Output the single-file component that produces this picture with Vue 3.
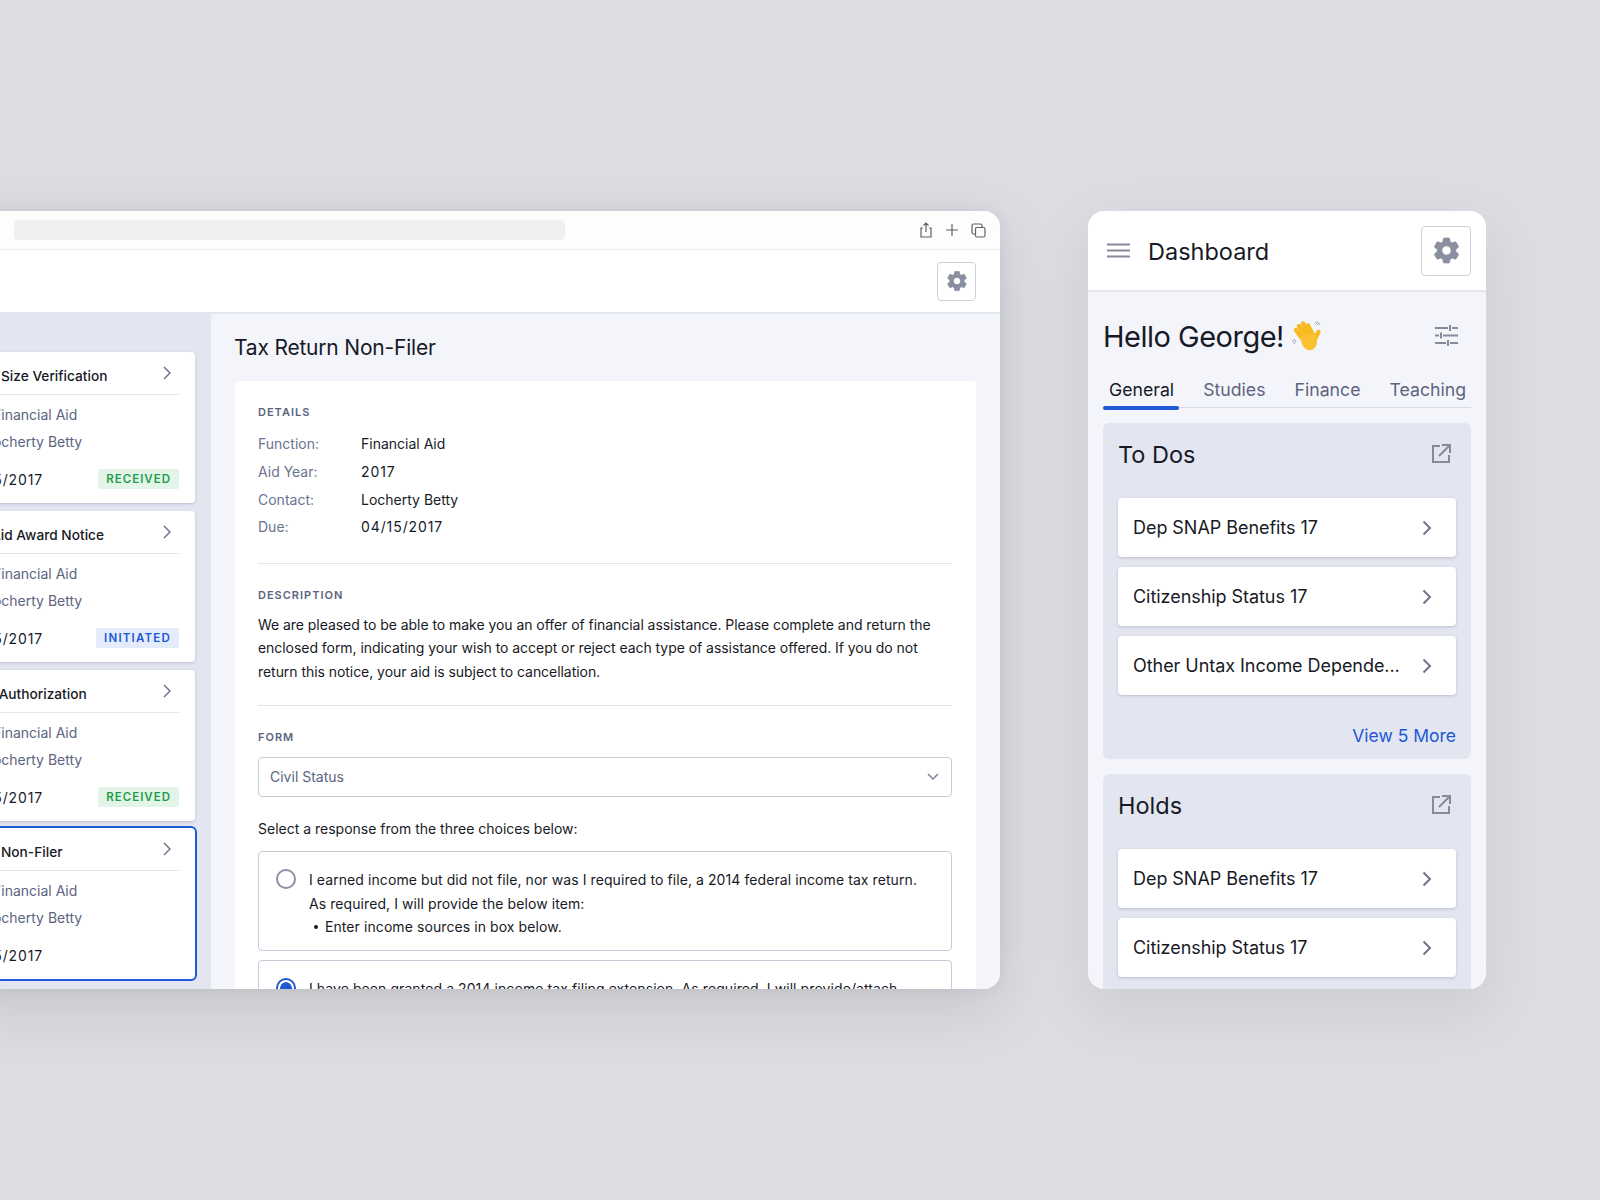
<template>
  <div class="page">
    <div class="browser">
      <div class="toolbar">
        <div class="address"></div>
        <div class="tools">
          <svg class="tool" viewBox="0 0 14 16" width="14" height="16"><path d="M4 6H2v9h10V6h-2M7 10V1M4.5 3.5L7 1l2.5 2.5" /></svg>
          <svg class="tool" viewBox="0 0 14 14" width="14" height="14"><path d="M7 1v12M1 7h12" /></svg>
          <svg class="tool" viewBox="0 0 15 15" width="15" height="15"><rect x="4.500" y="4.500" width="9.500" height="9.500" rx="1.500" /><path d="M4.500 11H2.500A1.500 1.500 0 0 1 1 9.500v-7A1.500 1.500 0 0 1 2.500 1h7A1.500 1.500 0 0 1 11 2.500v2" /></svg>
        </div>
      </div>
      <div class="app-head">
        <button class="gear-btn">
          <svg viewBox="0 0 24 24" width="24" height="24"><path :d="gearPath" /></svg>
        </button>
      </div>
      <div class="app-body">
        <aside class="rail">
          <div v-for="c in cards" :key="c.title" class="card" :class="{ active: c.active }">
            <div class="card-title">
              <span>{{ c.title }}</span>
              <svg class="chev" viewBox="0 0 8 14" width="8" height="14"><path d="M1 1l6 6-6 6" /></svg>
            </div>
            <div class="line">Financial Aid</div>
            <div class="line contact">Locherty Betty</div>
            <div class="card-foot">
              <span class="date">04/15/2017</span>
              <span v-if="c.status" class="pill" :class="c.status.toLowerCase()">{{ c.status }}</span>
            </div>
          </div>
        </aside>
        <main class="main">
          <h1 class="main-title">Tax Return Non-Filer</h1>
          <section class="sheet">
            <h2 class="label">DETAILS</h2>
            <div class="details">
              <template v-for="d in details" :key="d.key">
                <span class="d-key">{{ d.key }}</span>
                <span :class="{ date: d.numeric }">{{ d.value }}</span>
              </template>
            </div>
            <hr class="rule first" />
            <h2 class="label">DESCRIPTION</h2>
            <p class="para">We are pleased to be able to make you an offer of financial assistance. Please complete and return the enclosed form, indicating your wish to accept or reject each type of assistance offered. If you do not return this notice, your aid is subject to cancellation.</p>
            <hr class="rule second" />
            <h2 class="label">FORM</h2>
            <div class="select">
              <span>Civil Status</span>
              <svg viewBox="0 0 12 8" width="12" height="8"><path d="M1 1l5 5 5-5" /></svg>
            </div>
            <p class="prompt">Select a response from the three choices below:</p>
            <div class="option">
              <span class="radio"></span>
              <div class="opt-text">
                <div>I earned income but did not file, nor was I required to file, a 2014 federal income tax return.</div>
                <div>As required, I will provide the below item:</div>
                <div class="bullet">Enter income sources in box below.</div>
              </div>
            </div>
            <div class="option">
              <span class="radio on"></span>
              <div class="opt-text">
                <div>I have been granted a 2014 income tax filing extension. As required, I will provide/attach</div>
              </div>
            </div>
          </section>
        </main>
      </div>
    </div>

    <div class="phone">
      <header class="phone-head">
        <svg class="burger" viewBox="0 0 23 15" width="23" height="15"><path d="M0 1.500h23M0 7.500h23M0 13.500h23" /></svg>
        <span class="phone-title">Dashboard</span>
        <button class="gear-btn big">
          <svg viewBox="0 0 24 24" width="31" height="31"><path :d="gearPath" /></svg>
        </button>
      </header>
      <div class="phone-body">
        <div class="hello">
          <span>Hello George!</span>
          <svg class="wave" viewBox="0 0 32 32" width="32" height="32">
            <g stroke="#8c8f99" stroke-width=".8" fill="none"><path d="M1 20l3 4M3 19l2 3M24 2l3 3M26 1l3 4" /></g>
            <g stroke="#f8b921" stroke-width="4.400" stroke-linecap="round" fill="none">
              <path d="M10 17L5 10M13 14L8 6M17 13L12 3.500M21 13L17 5.500M24 19l3.500-7" />
            </g>
            <path d="M9 16l15-3 2 8c0 6-4 10-9 9-4-1-7-6-8-14z" fill="#fbc02d" />
          </svg>
          <svg class="sliders" viewBox="0 0 23 21" width="23" height="21"><path d="M0 3h13M17 3h6M15 0v6M0 10.500h4M8 10.500h15M6 7.500v6M0 18h11M15 18h8M13 15v6" /></svg>
        </div>
        <nav class="tabs">
          <span v-for="t in tabs" :key="t" class="tab" :class="{ current: t === 'General' }">{{ t }}</span>
        </nav>
        <section v-for="p in panels" :key="p.title" class="panel">
          <div class="panel-head">
            <h3>{{ p.title }}</h3>
            <svg viewBox="0 0 20 20" width="20" height="20"><path d="M9 2H2v16h16v-7M11 1h8v8M19 1L8 12" /></svg>
          </div>
          <div v-for="r in p.rows" :key="r" class="row">
            <span>{{ r }}</span>
            <svg class="chev wide" viewBox="0 0 10 16" width="10" height="16"><path d="M1.500 1.500L8 8l-6.500 6.500" /></svg>
          </div>
          <a v-if="p.more" class="more">View 5 More</a>
        </section>
      </div>
    </div>
  </div>
</template>

<script setup>
const gearPath = 'M19.14 12.94c.04-.3.06-.61.06-.94 0-.32-.02-.64-.07-.94l2.03-1.58a.49.49 0 0 0 .12-.61l-1.92-3.32a.488.488 0 0 0-.59-.22l-2.39.96c-.5-.38-1.03-.7-1.62-.94l-.36-2.54a.484.484 0 0 0-.48-.41h-3.84c-.24 0-.43.17-.47.41l-.36 2.54c-.59.24-1.13.57-1.62.94l-2.39-.96c-.22-.08-.47 0-.59.22L2.74 8.87c-.12.21-.08.47.12.61l2.03 1.58c-.05.3-.09.63-.09.94s.02.64.07.94l-2.03 1.58a.49.49 0 0 0-.12.61l1.92 3.32c.12.22.37.29.59.22l2.39-.96c.5.38 1.03.7 1.62.94l.36 2.54c.05.24.24.41.48.41h3.84c.24 0 .44-.17.47-.41l.36-2.54c.59-.24 1.13-.56 1.62-.94l2.39.96c.22.08.47 0 .59-.22l1.92-3.32c.12-.22.07-.47-.12-.61l-2.01-1.58zM12 15.6c-1.98 0-3.6-1.62-3.6-3.6s1.62-3.6 3.6-3.6 3.6 1.62 3.6 3.6-1.62 3.6-3.6 3.6z'

const cards = [
  { title: '- Size Verification', status: 'RECEIVED' },
  { title: 'Aid Award Notice', status: 'INITIATED' },
  { title: '. Authorization', status: 'RECEIVED' },
  { title: '- Non-Filer', active: true },
]

const details = [
  { key: 'Function:', value: 'Financial Aid' },
  { key: 'Aid Year:', value: '2017', numeric: true },
  { key: 'Contact:', value: 'Locherty Betty' },
  { key: 'Due:', value: '04/15/2017', numeric: true },
]

const tabs = ['General', 'Studies', 'Finance', 'Teaching']

const panels = [
  { title: 'To Dos', more: true, rows: ['Dep SNAP Benefits 17', 'Citizenship Status 17', 'Other Untax Income Depende...'] },
  { title: 'Holds', rows: ['Dep SNAP Benefits 17', 'Citizenship Status 17'] },
]
</script>

<style>
body { background: #dcdde2; overflow: hidden; }
</style>

<style scoped>
.page {
  display: flex;
  align-items: flex-start;
  gap: 88px;
  height: 1200px;
  box-sizing: border-box;
  padding-top: 211px;
  margin-left: -39px;
  overflow: hidden;
  font-family: "Inter", "Noto Sans", sans-serif;
  font-size: 14px;
  color: #171a26;
}
.browser {
  width: 1039px;
  height: 778px;
  flex: none;
  display: flex;
  flex-direction: column;
  background: #fff;
  border-radius: 0 16px 16px 0;
  overflow: hidden;
  box-shadow: 0 20px 60px rgba(0, 0, 0, 0.1), 0 0 16px rgba(0, 0, 0, 0.06);
}
.toolbar {
  height: 38px;
  flex: none;
  display: flex;
  align-items: center;
  justify-content: space-between;
  padding: 0 14px 0 53px;
  background: #fdfdfd;
  border-bottom: 1px solid #eceded;
}
.address { width: 551px; height: 20px; background: #f0f0f0; border-radius: 4px; }
.tools { display: flex; align-items: center; gap: 12px; }
.tool { fill: none; stroke: #5e6068; stroke-width: 1.2; }
.app-head {
  height: 62px;
  flex: none;
  display: flex;
  align-items: center;
  justify-content: flex-end;
  padding-right: 24px;
  border-bottom: 2px solid #e3e5ec;
}
.gear-btn {
  width: 39px;
  height: 39px;
  padding: 0;
  display: flex;
  align-items: center;
  justify-content: center;
  background: #fff;
  border: 1.5px solid #cdd0dc;
  border-radius: 4px;
}
.gear-btn svg { fill: #8a8f9f; stroke: #8a8f9f; stroke-width: 0.7; }
.gear-btn.big { width: 50px; height: 50px; margin-left: auto; }
.app-body { flex: 1; display: flex; min-height: 0; }
.rail {
  width: 250px;
  flex: none;
  box-sizing: border-box;
  padding: 38px 16px 0;
  background: #e3e6f0;
  display: flex;
  flex-direction: column;
  gap: 8px;
}
.card {
  height: 151px;
  flex: none;
  box-sizing: border-box;
  padding: 0 16px;
  background: #fff;
  border-radius: 4px;
  box-shadow: 0 1px 3px rgba(70, 76, 110, 0.25);
}
.card.active { outline: 2px solid #2158d6; outline-offset: 0; box-shadow: none; margin-top: -1px; }
.card-title {
  height: 43px;
  box-sizing: border-box;
  display: flex;
  align-items: center;
  justify-content: space-between;
  padding-right: 8px;
  font-size: 13.7px;
  font-weight: 500;
  border-bottom: 1.5px solid #e3e5ec;
}
.card-title span { padding-top: 6px; margin-left: -2px; }
.chev { fill: none; stroke: #6f758c; stroke-width: 1.5; }
.chev.wide { stroke-width: 2; }
.line { line-height: 27px; color: #5c6480; }
.card-title + .line { margin-top: 6px; }
.contact { margin-left: -8px; }
.date { letter-spacing: 0.9px; }
.card-foot { display: flex; align-items: center; justify-content: space-between; margin: 14px 0 0 -32px; height: 20px; }
.pill {
  height: 20px;
  box-sizing: border-box;
  padding: 0 8px;
  line-height: 21px;
  font-size: 11.5px;
  font-weight: 600;
  letter-spacing: 1px;
  border-radius: 2px;
}
.received { background: #e3f4e8; color: #1e9e4a; }
.initiated { background: #e4ecfb; color: #2158d6; letter-spacing: 1.2px; }
.main { flex: 1; min-width: 0; box-sizing: border-box; padding: 0 24px; background: #f4f5fa; }
.main-title { margin: 20px 0 0 -1px; font-size: 21px; letter-spacing: -0.2px; line-height: 28px; font-weight: 400; height: 47px; }
.sheet { box-sizing: border-box; height: 700px; padding: 24px 24px 24px 23px; background: #fff; border-radius: 4px; }
.label {
  margin: 0;
  font-size: 11px;
  line-height: 14px;
  font-weight: 600;
  letter-spacing: 1px;
  color: #5c6480;
}
.details {
  display: grid;
  grid-template-columns: 103px 1fr;
  grid-auto-rows: 27.7px;
  align-items: center;
  margin-top: 11px;
}
.d-key { color: #6b7390; }
.rule { margin: 0; border: 0; border-top: 1.5px solid #e3e5ec; }
.rule.first { margin: 22px 0 24px; }
.rule.second { margin: 21px 0 24px; }
.para { margin: 11px 0 0; line-height: 23.7px; letter-spacing: -0.05px; }
.select {
  margin-top: 13px;
  height: 40px;
  box-sizing: border-box;
  padding: 0 12px 0 11px;
  display: flex;
  align-items: center;
  justify-content: space-between;
  color: #5c6480;
  border: 1.5px solid #c8cbd9;
  border-radius: 4px;
}
.select svg { fill: none; stroke: #7a8098; stroke-width: 1.5; }
.prompt { margin: 20px 0 0; line-height: 24px; }
.option {
  margin-top: 10px;
  box-sizing: border-box;
  padding: 16px 32px 11px 17px;
  display: flex;
  gap: 13px;
  border: 1.5px solid #c8cbd9;
  border-radius: 4px;
}
.option + .option { margin-top: 9px; }
.radio {
  width: 20px;
  height: 20px;
  margin-top: 1px;
  flex: none;
  box-sizing: border-box;
  border: 2px solid #8b91a5;
  border-radius: 50%;
}
.radio.on { border-color: #2158d6; background: radial-gradient(circle, #2158d6 5.5px, #fff 6px); }
.opt-text { line-height: 23.7px; letter-spacing: 0.08px; }
.bullet { padding-left: 16px; position: relative; }
.bullet::before { content: ""; position: absolute; left: 5px; top: 10px; width: 4px; height: 4px; border-radius: 50%; background: #171a26; }

.phone {
  width: 398px;
  height: 778px;
  flex: none;
  display: flex;
  flex-direction: column;
  background: #f4f5fa;
  border-radius: 16px;
  overflow: hidden;
  box-shadow: 0 20px 60px rgba(0, 0, 0, 0.08);
}
.phone-head {
  height: 81px;
  flex: none;
  box-sizing: border-box;
  padding: 0 15px 0 19px;
  display: flex;
  align-items: center;
  background: #fff;
  border-bottom: 2px solid #e3e5ec;
}
.burger { fill: none; stroke: #868b9c; stroke-width: 2; }
.phone-title { margin: 3px 0 0 18px; font-size: 23.5px; line-height: 32px; }
.phone-body { flex: 1; padding: 0 15px; display: flex; flex-direction: column; min-height: 0; }
.hello { margin-top: 26px; height: 36px; flex: none; display: flex; align-items: center; font-size: 29px; letter-spacing: -0.5px; }
.wave { margin-left: 7px; }
.sliders { margin-left: auto; margin-right: 13px; margin-bottom: 2px; fill: none; stroke: #868b9c; stroke-width: 2; }
.tabs {
  margin-top: 18px;
  height: 36px;
  flex: none;
  display: flex;
  gap: 29px;
  box-sizing: border-box;
  padding: 2px 6px 0;
  border-bottom: 1.5px solid #d8dbe6;
  font-size: 17.7px;
  line-height: 32px;
  color: #5c6480;
}
.tab { position: relative; }
.tab.current { color: #171a26; }
.tab.current::after { content: ""; position: absolute; left: -6px; right: -5px; bottom: -2.5px; height: 4px; border-radius: 2px; background: #2158d6; }
.panel {
  margin-top: 15px;
  flex: none;
  box-sizing: border-box;
  padding: 0 15px 7px;
  background: #e3e6f0;
  border-radius: 6px;
}
.panel-head { height: 75px; display: flex; align-items: flex-start; justify-content: space-between; padding-right: 5px; }
.panel-head h3 { margin: 16px 0 0; font-size: 23.5px; line-height: 32px; font-weight: 400; }
.panel-head svg { margin-top: 21px; fill: none; stroke: #868b9c; stroke-width: 2; }
.row {
  height: 59px;
  box-sizing: border-box;
  margin-bottom: 10px;
  padding: 0 24px 0 15px;
  display: flex;
  align-items: center;
  justify-content: space-between;
  font-size: 18px;
  letter-spacing: -0.05px;
  background: #fff;
  border-radius: 4px;
  box-shadow: 0 1px 3px rgba(70, 76, 110, 0.25);
}
.more { display: block; margin-top: 25px; text-align: right; font-size: 17.5px; line-height: 32px; color: #2158d6; }
</style>
